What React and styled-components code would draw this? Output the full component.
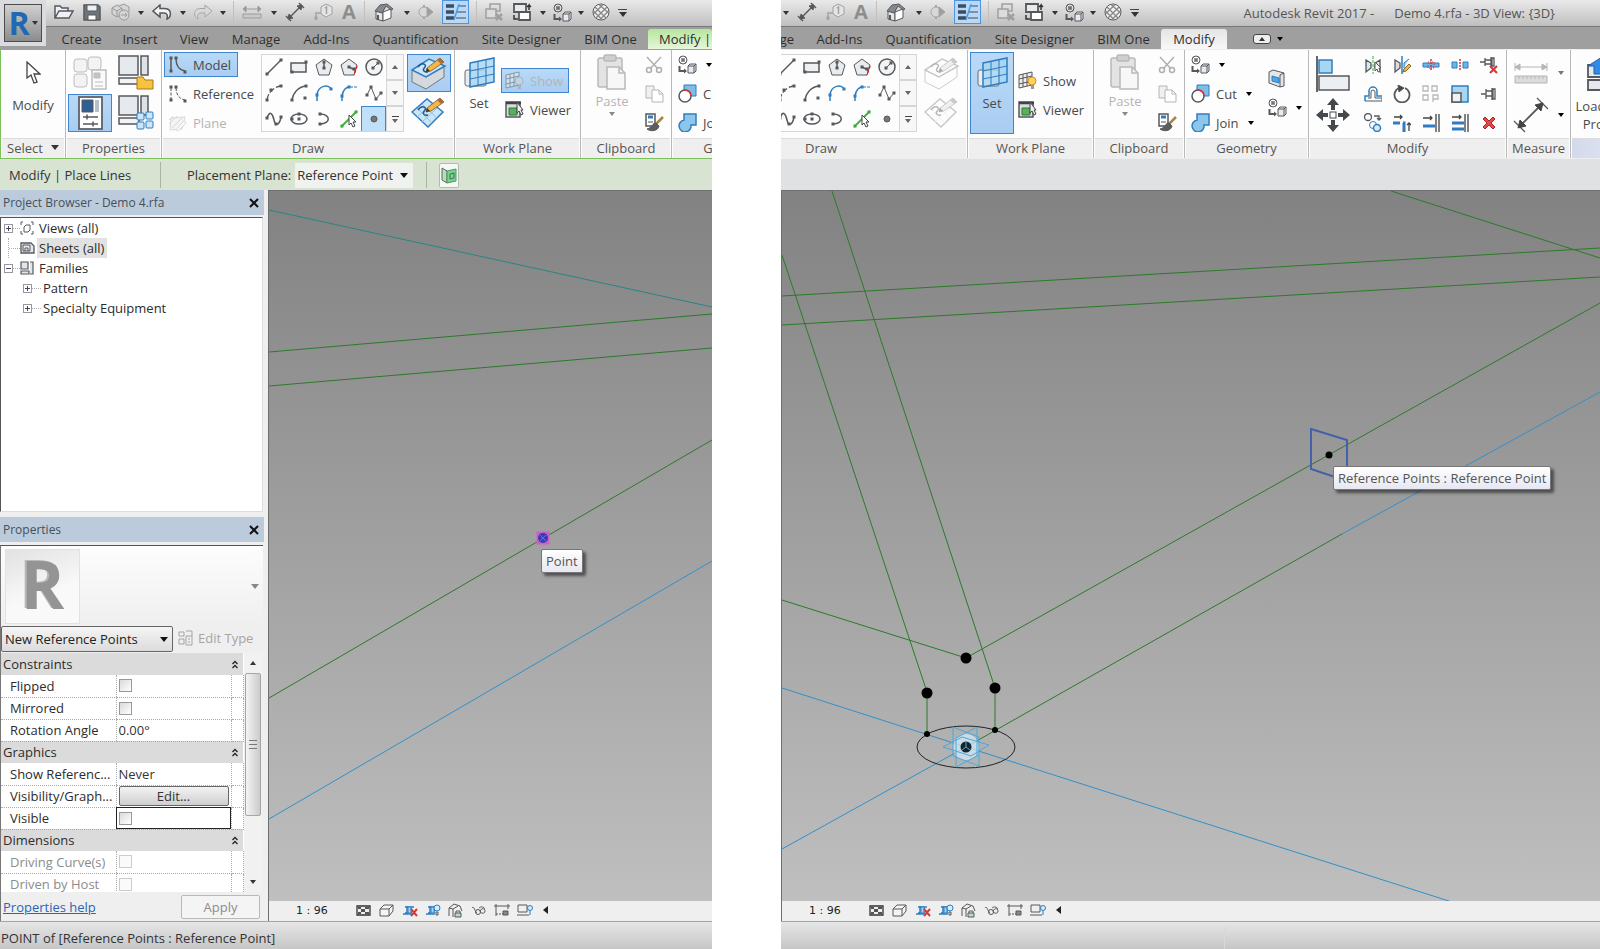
import React from "react";
import styled, { createGlobalStyle, css } from "styled-components";

const GlobalStyle = createGlobalStyle`
  * {
    box-sizing: border-box;
  }
  body {
    margin: 0;
    background: #fff;
    color: #333;
    font-family: "Open Sans", "Noto Sans", sans-serif;
    font-size: 13px;
    line-height: 18px;
    overflow: hidden;
  }
  button, select, input {
    font: inherit;
    color: inherit;
    margin: 0;
  }
  svg {
    display: block;
    flex: none;
  }
`;

/* icons */
const INK = "#55585c";
const BLUE = "#2f7dc0";
const SKY = "#a8d5f2";

const node = (x, y, c = INK) => (
  <rect key={`${x}-${y}`} x={x - 1.5} y={y - 1.5} width="3" height="3" fill={c} stroke="none" />
);

const groupArt = (
  <>
    <circle cx="5" cy="5" r="4" />
    <circle cx="5" cy="5" r="1.3" />
    <path d="M2 2l6 6M8 2l-6 6" strokeWidth=".6" />
    <path d="M1.5 11v5h5" strokeWidth="2" />
    <path d="M6 13.5l3 2.5-3 2.5z" fill={INK} stroke="none" />
    <path d="M10 11l2-2h6v7l-2 2h-6zM10 11h6v7M16 11l2-2" fill="#e8eaee" />
  </>
);

const pencil = (
  <g stroke="none">
    <path d="M15 16l1-4L29 2l4 4-13 9z" fill="#f2b64a" stroke="#7d5a22" strokeWidth=".8" />
    <path d="M29 2l4 4-3 2-4-4z" fill="#b06a3a" />
    <path d="M15 16l1-4 3 3z" fill="#333" />
  </g>
);

const planeGrid = (
  <>
    <rect x="1" y="13" width="21" height="16" rx="2" fill="#e9edf2" stroke="#6a6e74" />
    <path d="M6 6l24-5v24L6 30z" fill={SKY} fillOpacity=".8" stroke={BLUE} strokeWidth="1.5" />
    <path d="M14 4.5v24M22 2.5v24M6 14l24-5M6 22l24-5" stroke={BLUE} />
  </>
);

const dimArt = (
  <>
    <path d="M4 16L16 4" strokeWidth="1.5" />
    <path d="M1 14l5 5M14 1l5 5" strokeWidth="1.5" />
    <path d="M3 17l1-5 4 4zM17 3l-1 5-4-4z" fill={INK} />
  </>
);

const blocks = (
  <>
    <path d="M1 1h19v19H1z" fill="#e6e9ed" strokeWidth="1.5" />
    <path d="M23 1h7v19h-7z" fill="#dde2e7" strokeWidth="1.5" />
    <path d="M1 23h20v6H1z" fill="#f4f4f4" strokeWidth="1.5" />
  </>
);

const revealArt = (
  <>
    <path d="M1 11h3v-2M5 3v8h4V5M3 4h9" stroke={BLUE} strokeWidth="1.5" />
    <path d="M6 4h3v6H6z" fill={SKY} stroke={BLUE} />
  </>
);

const ICONS = {
  open: [20, 16, <path d="M1 14V2h5l2 2h6v3M1 14l4-7h14l-4 7z" fill="#eef2f6" strokeWidth="1.5" />],
  save: [18, 18, <><path d="M1 2h14l2 2v13H1z" fill="#70767c" strokeWidth="1.5" /><path d="M4 2h10v6H4z" fill="#eef1f4" /><path d="M5 12h8v5H5z" fill="#fff" /></>],
  sync: [19, 18, <g stroke="#999" fill="#d5d5d5"><path d="M1 5l5-3 5 3v6l-5 3-5-3zM1 5l5 3 5-3M6 8v6" /><path d="M8 3l5-2 5 3v5" /><circle cx="13" cy="12" r="5" /><path d="M10 12h6l-2-2m2 2l-2 2" /></g>],
  undo: [20, 16, <path d="M1 7l7-6v3.5h4c9 0 7 9 3 10.5 1-4 0-6-3-6H8V13z" fill="#f2f4f6" strokeWidth="1.5" />],
  redo: [20, 16, <path d="M19 7l-7-6v3.5H8c-9 0-7 9-3 10.5-1-4 0-6 3-6h4V13z" fill="#d9d9d9" stroke="#a5a5a5" />],
  measure: [20, 14, <g stroke="#9b9b9b"><path d="M2 4h16M1 4l3-3v6zM19 4l-3-3v6z" fill="#9b9b9b" /><path d="M1 9h18v4H1z" fill="#c9c9c9" /></g>],
  dimension: [20, 20, dimArt],
  tag: [19, 18, <g stroke="#a2a2a2"><path d="M2 17v-7h5" strokeWidth="1.5" /><path d="M12 1l6 3v7l-6 3-5-3V4z" fill="#e4e4e4" /><path d="M11 5l1.5-1v7" strokeWidth="1.5" />{node(2, 15, "#a2a2a2")}</g>],
  home: [20, 19, <><path d="M2 8v8l7 2V9z" fill="#e4e6e9" /><path d="M9 9l8-3v9l-8 3z" fill="#fff" /><path d="M1 8l5-6 7-1 6 5-2 1-5-4-4 7z" fill="#85898e" /><path d="M4 12v5" strokeWidth="2" /></>],
  section: [16, 14, <g stroke="#a5a5a5"><circle cx="6" cy="7" r="5" fill="#d8d8d8" /><path d="M9 2l6 5-6 5z" fill="#9f9f9f" /><path d="M6 0v2M6 12v2" strokeWidth="2" /></g>],
  thin: [20, 18, <><path d="M0 3h8M0 9h8M0 15h8" strokeWidth="3.5" stroke="#3d4c60" /><path d="M13 3h7M11 9h9M10 15h10" stroke="#3d4c60" /><path d="M13 1L8 17" stroke="#4aa0e8" strokeWidth="1.5" /></>],
  closeHidden: [19, 18, <g stroke="#a0a0a0"><path d="M5 1h10v7H5z" strokeWidth="1.5" /><path d="M1 6h10v9H1z" fill="#dcdcdc" strokeWidth="1.5" /><path d="M11 11l6 6M17 11l-6 6" strokeWidth="2.5" /></g>],
  switchWin: [20, 18, <><path d="M2 1h12v8H2z" fill="#e8eaed" strokeWidth="1.8" /><path d="M7 9h11v8H7z" fill="#fff" strokeWidth="1.8" /><path d="M17 7V2l-2 2m2-2l2 2M2 12v4h4" stroke="#333" strokeWidth="1.5" /></>],
  group: [19, 19, groupArt],
  sphere: [18, 18, <><circle cx="9" cy="9" r="8" fill="#f0f1f3" /><path d="M3 4l11 11M7 1.5L16.5 10M1.5 8L10 16.5M15 4L4 15M11 1.5L1.5 11M16.5 8L8 16.5" stroke="#888" strokeWidth="1.3" /></>],

  cursor: [15, 23, <path d="M1 1v16l4-3 3 8 3-1-3-8h6z" fill="#fff" stroke="#444" strokeWidth="1.3" />],
  typeProps: [35, 34, <g stroke="#bdbdbd" fill="#f3f3f3"><rect x="1" y="3" width="13" height="13" rx="3" /><rect x="15" y="1" width="13" height="13" rx="3" /><rect x="1" y="18" width="13" height="13" rx="3" /><rect x="19" y="14" width="14" height="19" fill="#fafafa" strokeWidth="1.5" /><path d="M21 17h6v5h-6z" fill="#c4c4c4" /><path d="M22 26h8M22 30h8" /></g>],
  familyTypes: [36, 36, <>{blocks}<path d="M19 34V22h6l2 3h8v9z" fill="#f5c33f" stroke="#a87712" /></>],
  propsPalette: [25, 34, <><rect x="1" y="1" width="23" height="32" fill="#fff" stroke="#5d6268" strokeWidth="1.8" /><path d="M4 4h11v12H4z" fill="#2f5f95" /><path d="M17 4h4v12h-4z" fill="#b9bfc6" stroke="none" /><path d="M5 21h15M9 18.5v5M5 28h15M15 25.5v5" strokeWidth="1.5" /></>],
  familyGrid: [36, 36, <>{blocks}<g fill="#c9e6fa" stroke="#2e7cba"><rect x="19" y="18" width="7" height="7" rx="1" /><rect x="28" y="17" width="7" height="7" rx="1" /><rect x="19" y="27" width="7" height="7" rx="1" /><rect x="28" y="26" width="7" height="7" rx="1" /></g></>],
  model: [19, 18, <><path d="M3 3v12M8 3c0 6 3 11 9 12" strokeWidth="1.5" />{node(3, 2)}{node(8, 2)}{node(3, 15)}{node(17, 16)}</>],
  reference: [19, 18, <><path d="M3 3v12M8 3c0 6 3 11 9 12" strokeDasharray="3 1.5" />{node(3, 2)}{node(8, 2)}{node(3, 15)}{node(17, 16)}</>],
  refPlane: [19, 18, <g stroke="#b5b5b5"><path d="M3 4l14-1-3 12-12 1z" fill="#ededed" /><path d="M8 16l8-9 2 2-8 8z" fill="#fff" /><path d="M1 6l4-4M1 10l8-8M4 14L15 3" /></g>],

  line: [18, 18, <><path d="M2 16L16 2" strokeWidth="1.5" />{node(2, 16)}{node(16, 2)}</>],
  rect: [18, 14, <><path d="M1 3h15v9H1z" fill="#eef0f2" strokeWidth="1.5" />{node(16, 2)}{node(2, 12)}</>],
  polygonIn: [18, 18, <><path d="M9 1l8 6-3 10H4L1 7z" fill="#e9ecef" /><path d="M9 4v6" strokeWidth="1.5" />{node(9, 4)}{node(9, 10)}</>],
  polygonOut: [18, 18, <><path d="M9 1l8 6-3 10H4L1 7z" fill="#e9ecef" /><path d="M9 9l6 3" strokeWidth="1.5" /><path d="M17 8l-3 9" stroke="#d22" strokeDasharray="3 1.5" strokeWidth="1.5" />{node(9, 9)}{node(14, 11)}</>],
  circle: [18, 18, <><circle cx="9" cy="9" r="8" fill="#f2f3f4" strokeWidth="1.5" /><path d="M8 10l6-6" />{node(8, 10)}{node(13, 5)}</>],
  arcStart: [18, 18, <><path d="M2 16C3 9 8 3 16 2" strokeDasharray="6 2" strokeWidth="1.3" />{node(2, 16)}{node(6, 6)}{node(16, 2)}</>],
  arcCenter: [18, 18, <><path d="M2 16C3 9 8 3 16 2" strokeWidth="1.3" />{node(2, 16)}{node(16, 2)}{node(15, 14)}</>],
  arcTangent: [18, 18, <><path d="M2 17V11C3 1 14 0 16 5" stroke={BLUE} strokeWidth="1.5" />{node(2, 11, BLUE)}{node(16, 5, BLUE)}</>],
  arcFillet: [18, 18, <><path d="M2 17v-5C3 6 6 3 10 3" stroke={BLUE} strokeWidth="1.5" /><path d="M10 3h8" stroke={BLUE} strokeDasharray="3 1" />{node(2, 12, BLUE)}{node(9, 3, BLUE)}</>],
  spline: [18, 18, <><path d="M2 11L6 3l5 12 5-6" />{node(2, 11)}{node(6, 3)}{node(11, 15)}{node(16, 9)}</>],
  splinePts: [18, 16, <><path d="M2 7C5-2 8 4 9 9s5 7 7-3" strokeWidth="1.5" />{node(2, 7)}{node(11, 13)}{node(16, 6)}</>],
  ellipse: [18, 14, <><ellipse cx="9" cy="7" rx="8" ry="5" strokeWidth="1.5" />{node(9, 7)}{node(9, 2)}{node(2, 7)}</>],
  halfEllipse: [12, 14, <><path d="M2 2c11 0 11 10 0 10" strokeWidth="1.5" />{node(2, 2)}{node(2, 12)}</>],
  pick: [18, 18, <><path d="M1 17L17 1" stroke="#3fae3a" strokeWidth="1.8" />{node(2, 16, "#3fae3a")}{node(16, 2, "#3fae3a")}<path d="M9 5v10l2-2 2 4 2-1-2-4h3z" fill="#fff" stroke="#444" /></>],
  point: [8, 8, <circle cx="4" cy="4" r="3" fill="#777" />],
  faceDraw: [36, 34, <><path d="M1 14v12l14 7 18-12V9L15 21z" fill="#d5d9dd" stroke="#73787e" /><path d="M1 14L18 3l16 7-19 11z" fill="#cbe6f8" stroke={BLUE} strokeWidth="1.5" /><path d="M7 11c4-6 9-2 7 0s-3 5 3 5" stroke="#1f5a94" strokeWidth="1.5" />{pencil}</>],
  planeDraw: [36, 34, <><path d="M1 16L16 3l16 13-15 15z" fill="#cbe6f8" stroke={BLUE} strokeWidth="1.5" /><path d="M6 12l15 15M11 8l15 14M6 21L21 8M11 26l15-14" stroke="#8fbfe2" /><path d="M7 14c4-6 9-2 7 0s-3 6 3 5" stroke="#1f5a94" strokeWidth="1.5" />{pencil}</>],

  setPlane: [31, 31, planeGrid],
  showPlane: [19, 19, <><path d="M1 4l13-3v13L1 17zM5 3v13M9 2v13M1 8l13-3M1 13l13-3" fill="#eee" /><circle cx="14" cy="10" r="4" fill="#ffd45c" stroke="#e08a1c" /><path d="M13 14h3v4h-3z" fill="#999" stroke="none" /></>],
  viewer: [19, 18, <><rect x="1" y="1" width="14" height="15" fill="#d9dde0" strokeWidth="1.5" /><path d="M1 2h15" strokeWidth="2.5" stroke="#444" /><path d="M4 7h8v7H4z" fill="#57b35a" stroke="#2c7a34" /><path d="M12 1v11l2-2 2 4 2-1-2-4h2z" fill="#eee" stroke="#444" /></>],
  paste: [30, 36, <g stroke="#b9b9b9" strokeWidth="1.5"><rect x="1" y="4" width="24" height="29" rx="2" fill="#e3e3e3" /><rect x="7" y="1" width="12" height="6" rx="2" fill="#cfcfcf" /><path d="M10 13h12l6 6v16H10z" fill="#f7f7f7" /><path d="M22 13v6h6" /></g>],
  scissors: [18, 18, <g stroke="#b0b0b0" strokeWidth="1.5"><path d="M2 1l11 12M16 1L5 13" /><circle cx="4" cy="14" r="2.5" /><circle cx="14" cy="14" r="2.5" /></g>],
  copy: [19, 18, <g stroke="#b5b5b5"><path d="M1 1h8v12H1z" fill="#f0f0f0" /><path d="M7 5h7l4 4v8H7z" fill="#fff" /><path d="M14 5v4h4" /></g>],
  match: [19, 19, <><rect x="1" y="1" width="9" height="12" fill="#fff" strokeWidth="1.5" /><path d="M3 4h5" stroke={BLUE} strokeWidth="3" /><path d="M3 9h5" /><path d="M18 4l-8 8" stroke="#a98545" strokeWidth="2.5" /><path d="M11 10c-4 0-4 5-9 6 4 3 11 2 12-3z" fill="#5a5d62" /></>],
  cut: [19, 19, <><path d="M6 1h12v11H6z" fill="#7fbce6" stroke={BLUE} /><circle cx="7" cy="12" r="6" fill="#fff" strokeWidth="1.5" /><path d="M6 6c4 0 7 2 7 6" stroke="#d33" strokeWidth="1.5" /></>],
  join: [19, 19, <path d="M6 1h12v11h-5a6 6 0 1 1-7-5z" fill="#8cc6ea" stroke={BLUE} strokeWidth="1.5" />],
  wallJoin: [18, 19, <><path d="M1 3l4-2 11 3v13l-4 1L1 14z" fill="#dfe6ec" /><path d="M4 7l7 2v5l-7-2z" fill="#54a3dd" stroke={BLUE} /><path d="M12 6v12M12 6l4-2" /></>],

  align: [36, 36, <><path d="M2 0v36" stroke="#333" strokeWidth="1.5" /><path d="M4 4h13v13H4z" fill={SKY} stroke={BLUE} strokeWidth="1.5" /><path d="M4 20h30v14H4z" fill="#eceff1" strokeWidth="1.5" /></>],
  move: [36, 36, <g fill="#45494e" stroke="none"><path d="M18 1l6 7h-4v5h-4V8h-4zM18 35l6-7h-4v-5h-4v5h-4zM1 18l7-6v4h5v4H8v4zM35 18l-7-6v4h-5v4h5v4z" /><rect x="15" y="15" width="6" height="6" fill="#fff" stroke="#45494e" /></g>],
  mirrorPick: [18, 18, <><path d="M2 4l5 3v5l-5 4zM16 4l-5 3v5l5 4z" fill="#d6e6f2" strokeWidth="1.3" /><path d="M9 0v18" stroke="#3fae3a" strokeDasharray="3 1" /><path d="M11 6v9l2-2 1 3 2-1-1-3h2z" fill="#fff" /></>],
  mirrorDraw: [18, 18, <><path d="M2 4l5 3v5l-5 4z" fill="#ddd" strokeWidth="1.3" /><path d="M16 3l-5 4v5" fill={SKY} stroke={BLUE} /><path d="M9 0v18" stroke={BLUE} strokeWidth="1.5" /><path d="M10 16l1-3 5-5 2 2-5 5z" fill="#f2b64a" stroke="#8a6420" /></>],
  split: [18, 12, <><path d="M1 4h16v4H1z" fill="#6db5e4" stroke={BLUE} /><path d="M9 0v12" stroke="#d33" strokeDasharray="2 1" strokeWidth="1.5" /><path d="M6 3h6v6H6z" stroke="#d33" strokeDasharray="1 1" /></>],
  splitGap: [18, 12, <><path d="M1 3h5v6H1zM12 3h5v6h-5z" fill="#6db5e4" stroke={BLUE} /><path d="M9 0v12" stroke="#d33" strokeDasharray="2 1" strokeWidth="1.5" /></>],
  unpin: [18, 18, <><path d="M0 6h5M5 2v8M5 4h6M5 8h6M11 1v10M12 2h2v8h-2z" strokeWidth="1.3" /><path d="M10 10l7 7M17 10l-7 7" stroke="#d23b3b" strokeWidth="2.2" /></>],
  offset: [18, 16, <><path d="M1 15v-5h4V5a4 4 0 0 1 8 0v5h5" stroke={BLUE} strokeWidth="1.5" /><path d="M1 15h17v-3h-7V6a2 2 0 0 0-4 0v6H4" /></>],
  rotate: [18, 18, <><path d="M6 3a7.5 7.5 0 1 0 6 0" strokeWidth="1.8" /><path d="M5 0l6 3-5 4z" fill="#444" /></>],
  array: [18, 18, <g stroke="#b8b8b8" strokeWidth="1.3"><path d="M1 1h5v5H1zM10 1h5v5h-5zM1 10h5v5H1zM11 17v-7h5v4h-5" /></g>],
  scale: [18, 18, <><path d="M1 1h16v16H1z" fill={SKY} stroke={BLUE} strokeWidth="1.5" /><path d="M1 8h9v9H1z" fill="#f2f2f2" strokeWidth="1.5" /></>],
  pin: [15, 14, <path d="M0 7h5M5 2v10M5 4h6M5 9h6M11 1v12M12 2h2v10h-2z" strokeWidth="1.3" />],
  copyObj: [19, 19, <><circle cx="5" cy="4" r="3.5" strokeWidth="1.3" /><path d="M11 3h5v4m-2-2l2 2 2-2" strokeWidth="1.3" /><circle cx="10" cy="12" r="3.5" fill="#fff" stroke={BLUE} /><circle cx="14" cy="15" r="3.5" fill="#d5ebfa" stroke={BLUE} strokeWidth="1.5" /></>],
  trimCorner: [18, 18, <><path d="M1 3h8m-2-2l2 2-2 2M16 17V9m-2 2l2-2 2 2" stroke="#444" strokeWidth="1.3" /><path d="M0 9h7M10 9h1v9" stroke={BLUE} strokeWidth="3" /></>],
  trimSingle: [18, 18, <><path d="M1 4h9m-2-2l2 2-2 2" stroke="#444" strokeWidth="1.3" /><path d="M1 12h12" stroke={BLUE} strokeWidth="3" /><path d="M14 0v18M17 0v18" strokeWidth="1.5" /></>],
  trimMulti: [18, 18, <><path d="M1 3h9m-2-2l2 2-2 2" stroke="#444" strokeWidth="1.3" /><path d="M1 9h12M1 15h12" stroke={BLUE} strokeWidth="3" /><path d="M14 0v18M17 0v18" strokeWidth="1.5" /></>],
  del: [16, 16, <path d="M2 4l2-2 4 4 4-4 2 2-4 4 4 4-2 2-4-4-4 4-2-2 4-4z" fill="#e24a4a" stroke="#b52222" />],
  ruler: [34, 22, <g stroke="#b5b5b5"><path d="M1 5h32M1 1v8M33 1v8" /><path d="M1 5l5-3v6zM33 5l-5-3v6z" fill="#b5b5b5" /><path d="M1 14h32v7H1z" fill="#dcdcdc" /><path d="M5 14v3M9 14v3M13 14v3M17 14v3M21 14v3M25 14v3M29 14v3" /></g>],
  dimensionBig: [36, 36, <><path d="M6 30L29 7" strokeWidth="1.8" /><path d="M1 24l11 11M24 1l11 11" strokeWidth="1.3" /><path d="M5 31l2-8 6 6zM30 6l-2 8-6-6z" fill="#444" stroke="#444" /></>],
  load: [36, 34, <><path d="M2 8h14v12H2zM2 23h16v10H2z" fill="#e6e9ed" strokeWidth="1.8" /><path d="M16 0L2 9h6v8h14V9h6z" fill="#2f8de8" stroke="#1b5fae" /></>],
  workPlaneViewer: [16, 17, <><path d="M1 1l5 3v12L1 13z" fill="#b9dcbf" stroke="#5a6b5c" /><path d="M6 4l9-2v12l-9 2z" fill="#7fcf94" stroke="#4b9a5e" /><path d="M9 7l4-1v5l-4 1z" stroke="#2d7f48" /></>],

  views: [14, 14, <><path d="M1 4V1h2M11 1h2v3M1 10v3h2M13 10v3h-2" /><path d="M4 6l2-2h4v5l-2 2H4z" /></>],
  sheets: [15, 12, <><path d="M1 1h10l3 3v7H1z" fill="#e6e8ec" strokeWidth="1.3" /><path d="M3 3h7v6H3zM5 9V6h3v3" /></>],
  families: [14, 14, <path d="M1 1h7v7H1zM10 1h3v12h-3M1 10h8v3H1z" fill="#e3e5ea" strokeWidth="1.2" />],
  editType: [15, 16, <g stroke="#a5a5a5"><path d="M1 2h5v4H1zM8 1h6v5M1 9h5v5H1z" /><path d="M8 6h6v9H8z" /><path d="M10 9h2M10 12h2" /></g>],

  detail: [15, 11, <><path d="M1 1h13v9H1z" strokeWidth="1.3" stroke="#333" /><path d="M2 2h3v2H2zM9 2h4v2H9zM5 4h4v3H5zM2 7h3v2H2zM9 7h4v2H9z" fill="#555" stroke="none" /></>],
  visual: [15, 13, <path d="M1 5l4-4h9v6l-4 5H1zM1 5h9v7M10 5l4-4" fill="#f4f4f4" />],
  hideX: [16, 14, <>{revealArt}<path d="M9 6l6 7M15 6l-6 7" stroke="#d23b3b" strokeWidth="2" /></>],
  hideBulb: [16, 14, <>{revealArt}<circle cx="12" cy="5" r="3" fill="#d6ecff" stroke={BLUE} /><path d="M11 9h2v3h-2z" /></>],
  lockView: [15, 15, <><path d="M1 13V5l5-4 6 2 2 5M5 6v8M1 5l4 1 5-3" /><path d="M7 10h6v4H7z" fill="#b9dcc4" /><path d="M8 10V8h4v2" /></>],
  glasses: [15, 11, <><path d="M1 3c2-3 3 4 5 5" /><circle cx="7" cy="7" r="2.5" /><path d="M8 3c2-2 5-1 6 1M9 6c1-3 5-3 5 0s-4 3-5 0" /></>],
  constraints: [16, 12, <><path d="M2 0v12M14 0v5M0 2h16" /><path d="M2 10h7" strokeDasharray="2 1" /><path d="M9 7h5v4H9z" fill="#888" /></>],
  analytic: [16, 12, <><path d="M1 1h9v7H1zM0 11h12" /><circle cx="13" cy="4" r="2.5" fill="#d6ecff" stroke={BLUE} /><path d="M13 7v4" stroke={BLUE} /></>],
};

function Icon({ name }) {
  const [w, h, art] = ICONS[name];
  return (
    <svg width={w} height={h} viewBox={`0 0 ${w} ${h}`} fill="none" stroke={INK} strokeWidth="1" aria-hidden="true">
      {art}
    </svg>
  );
}

const Caret = styled.i`
  flex: none;
  width: 0;
  height: 0;
  border: 3px solid transparent;
  border-top: 4px solid ${(p) => p.$color || "#333"};
  border-bottom: 0;
  ${(p) => p.$up && css`transform: rotate(180deg);`}
`;

const WideCaret = styled(Caret)`
  border-width: 5px 4px 0;
`;

/* window frame */
const Page = styled.main`
  display: grid;
  grid-template-columns: minmax(0, 712fr) minmax(0, 819fr);
  gap: 69px;
  height: 100vh;
`;

const Pane = styled.section`
  display: flex;
  flex-direction: column;
  min-width: 0;
  overflow: hidden;
`;

const Header = styled.header`
  display: flex;
  background: #9f9f9f;
`;

const AppCell = styled.div`
  flex: none;
  width: 46px;
  height: 46px;
  padding: 4px;
  background: #dadbde;
`;

const AppButton = styled.button`
  display: flex;
  align-items: center;
  justify-content: center;
  gap: 2px;
  width: 38px;
  height: 38px;
  padding: 0;
  border: 1px solid #4c4c4c;
  background: linear-gradient(#d0d0d0, #8c8c8c);
`;

const AppLetter = styled.span`
  font-size: 32px;
  font-weight: 700;
  line-height: 36px;
  color: #1f68b4;
`;

const HeaderRows = styled.div`
  flex: 1;
  min-width: 0;
`;

const QuickBar = styled.div`
  display: flex;
  align-items: center;
  gap: 8px;
  height: 27px;
  padding-left: ${(p) => p.$start}px;
  padding-right: 45px;
  border-bottom: 1px solid #777;
  background: linear-gradient(#e9e9e9, #bfbfbf);
`;

const QuickButton = styled.button`
  display: flex;
  flex: none;
  align-items: center;
  justify-content: center;
  width: ${(p) => p.$w || 20}px;
  height: 24px;
  margin-bottom: 2px;
  padding: 0;
  border: 0;
  background: none;
  ${(p) =>
    p.$on &&
    css`
      border: 1px solid #4f94dc;
      background: #b8d8f8;
    `}
`;

const TextLetter = styled.span`
  font-size: 20px;
  font-weight: 700;
  line-height: 24px;
  color: #8d8d8d;
`;

const QuickSep = styled.span`
  flex: none;
  width: 1px;
  height: 24px;
  margin: 0 -1px;
  background: #c0c0c0;
`;

const MoreTools = styled.span`
  display: flex;
  flex: none;
  flex-direction: column;
  align-items: center;
  width: 9px;
  border-top: 1px solid #444;
  padding-top: 2px;
`;

const WindowTitle = styled.h1`
  display: flex;
  gap: 20px;
  margin: 0 0 0 auto;
  font-size: 13px;
  font-weight: 400;
  color: #555;
  white-space: nowrap;
`;

const TabBar = styled.nav`
  display: flex;
  align-items: flex-end;
  height: 22px;
  padding-left: ${(p) => p.$start}px;
`;

const Tab = styled.button`
  display: flex;
  flex: none;
  align-items: center;
  justify-content: ${(p) => p.$align || "center"};
  width: ${(p) => p.$w}px;
  height: 20px;
  padding: 0 ${(p) => p.$pad || 0}px;
  border: 0;
  background: none;
  color: #2e2e2e;
  white-space: nowrap;
  ${(p) =>
    p.$active &&
    css`
      border-radius: 3px 3px 0 0;
      background: ${p.$green ? "linear-gradient(#b6e59b, #e6f6dc)" : "linear-gradient(#e4e4e4, #f8f8f8)"};
    `}
`;

const RibbonToggle = styled.button`
  display: flex;
  align-items: center;
  gap: 6px;
  height: 20px;
  margin-left: 26px;
  padding: 0;
  border: 0;
  background: none;
`;

const ToggleFace = styled.span`
  display: flex;
  align-items: center;
  justify-content: center;
  width: 18px;
  height: 10px;
  border: 1px solid #444;
  border-radius: 3px;
  background: #eee;
`;

/* ribbon */
const Ribbon = styled.div`
  display: flex;
  flex: none;
  height: 110px;
  overflow: hidden;
  border-top: 1px solid ${(p) => (p.$green ? "#7bc25c" : "#eee")};
  border-bottom: 1px solid ${(p) => (p.$green ? "#7bc25c" : "#eee")};
  border-left: ${(p) => (p.$green ? "1px solid #7bc25c" : "0")};
  background: #fdfdfd;
`;

const Panel = styled.section`
  display: flex;
  flex-direction: column;
  flex: none;
  width: ${(p) => p.$w}px;
  margin-left: -${(p) => p.$crop || 0}px;
  border-right: 1px solid #b9b9b9;
`;

const PanelBody = styled.div`
  display: flex;
  flex: 1;
  align-items: flex-start;
  min-height: 0;
  padding: 2px;
  ${(p) => p.$end && css`justify-content: flex-end; padding-right: 3px;`}
`;

const PanelLabel = styled.h2`
  display: flex;
  flex: none;
  align-items: center;
  justify-content: center;
  gap: 8px;
  height: 20px;
  margin: 0 1px;
  padding-bottom: 2px;
  border-top: 1px solid #dcdcdc;
  background: ${(p) => (p.$tint ? "linear-gradient(90deg, #d3d9ec, #e6e9f5)" : "#efefef")};
  font-size: 13px;
  font-weight: 400;
  color: #555;
`;

const Stack = styled.div`
  display: flex;
  flex-direction: column;
  flex: none;
  gap: ${(p) => p.$gap || 0}px;
  width: ${(p) => (p.$w ? `${p.$w}px` : "auto")};
  padding-top: ${(p) => p.$top || 0}px;
`;

const lit = css`
  border-color: #3f86cf;
  background: linear-gradient(#b9d9f7, #a9cdf2);
`;

const RowTool = styled.button`
  display: flex;
  align-items: center;
  gap: 6px;
  width: ${(p) => (p.$w ? `${p.$w}px` : "auto")};
  height: 25px;
  padding: 0 3px;
  border: 1px solid transparent;
  background: none;
  color: ${(p) => (p.$off ? "#b4b4b4" : "#4a4a4a")};
  white-space: nowrap;
  ${Caret} {
    margin-left: 3px;
  }
  ${(p) => p.$on && lit}
  ${(p) => p.$off && css`svg { filter: grayscale(1); opacity: 0.5; }`}
`;

const IconTool = styled.button`
  display: flex;
  flex: none;
  align-items: center;
  justify-content: center;
  width: ${(p) => p.$w}px;
  height: ${(p) => p.$h}px;
  padding: 0;
  border: 1px solid transparent;
  background: none;
  ${(p) => p.$on && lit}
  ${(p) => p.$off && css`svg { filter: grayscale(1) brightness(1.2); opacity: 0.45; }`}
`;

const BigTool = styled.button`
  display: flex;
  flex-direction: column;
  flex: none;
  align-items: center;
  gap: ${(p) => p.$gap || 6}px;
  width: ${(p) => p.$w}px;
  height: 82px;
  padding: ${(p) => p.$top || 4}px 0 0;
  border: 1px solid transparent;
  background: none;
  color: ${(p) => (p.$off ? "#b4b4b4" : "#4a4a4a")};
  white-space: nowrap;
  ${(p) => p.$on && lit}
`;

const Gallery = styled.div`
  display: grid;
  grid-template-columns: repeat(5, 25px) 18px;
  grid-template-rows: repeat(3, 26px);
  flex: none;
  margin: 2px 3px 0 0;
  outline: 1px solid #d5d5d5;
  outline-offset: -1px;
`;

const GalleryItem = styled.button`
  display: flex;
  align-items: center;
  justify-content: center;
  padding: 0;
  border: 1px solid transparent;
  background: none;
  ${(p) => p.$on && css`border-color: #3f86cf; background: #bfe0f8;`}
`;

const GalleryScroll = styled.button`
  display: flex;
  flex-direction: column;
  align-items: center;
  justify-content: center;
  gap: 2px;
  padding: 0;
  border: 1px solid #d5d5d5;
  background: #f7f7f7;
  ${(p) => p.$bar && css`&::before { content: ""; width: 7px; height: 1px; background: #444; }`}
`;

const ModifyGrid = styled.div`
  display: grid;
  grid-template-columns: repeat(5, 29px);
  grid-template-rows: repeat(3, 25px);
  row-gap: 4px;
  margin-left: 3px;
`;

const SplitTool = styled.div`
  display: flex;
  align-items: center;
  gap: 5px;
`;

const DRAW_TOOLS = [
  "line", "rect", "polygonIn", "polygonOut", "circle", "up",
  "arcStart", "arcCenter", "arcTangent", "arcFillet", "spline", "down",
  "splinePts", "ellipse", "halfEllipse", "pick", "point", "more",
];

function DrawPanel({ active }) {
  return (
    <Panel $w={293} $crop={active ? 0 : 106}>
      <PanelBody $end>
        {active && (
          <Stack $w={97} $gap={4}>
            <RowTool $w={74} $on><Icon name="model" />Model</RowTool>
            <RowTool><Icon name="reference" />Reference</RowTool>
            <RowTool $off disabled><Icon name="refPlane" />Plane</RowTool>
          </Stack>
        )}
        <Gallery>
          {DRAW_TOOLS.map((tool) =>
            ["up", "down", "more"].includes(tool) ? (
              <GalleryScroll key={tool} $bar={tool === "more"} aria-label={tool}>
                <Caret $up={tool === "up"} $color="#666" />
              </GalleryScroll>
            ) : (
              <GalleryItem key={tool} $on={active && tool === "point"} aria-label={tool}>
                <Icon name={tool} />
              </GalleryItem>
            )
          )}
        </Gallery>
        <Stack $top={2} $gap={2}>
          <IconTool $w={44} $h={38} $on={active} $off={!active} aria-label="Draw on Face"><Icon name="faceDraw" /></IconTool>
          <IconTool $w={44} $h={38} $off={!active} aria-label="Draw on Work Plane"><Icon name="planeDraw" /></IconTool>
        </Stack>
      </PanelBody>
      <PanelLabel>Draw</PanelLabel>
    </Panel>
  );
}

function WorkPlanePanel({ setting }) {
  return (
    <Panel $w={126}>
      <PanelBody>
        <BigTool $w={44} $on={setting}><Icon name="setPlane" />Set</BigTool>
        <Stack $top={16} $gap={4}>
          <RowTool $w={68} $on={!setting} $off={!setting}><Icon name="showPlane" />Show</RowTool>
          <RowTool><Icon name="viewer" />Viewer</RowTool>
        </Stack>
      </PanelBody>
      <PanelLabel>Work Plane</PanelLabel>
    </Panel>
  );
}

function ClipboardPanel() {
  return (
    <Panel $w={91}>
      <PanelBody>
        <BigTool $w={58} $gap={2} $top={1} $off disabled>
          <Icon name="paste" />
          <span>Paste</span>
          <Caret $color="#888" />
        </BigTool>
        <Stack $gap={4}>
          <IconTool $w={26} $h={25} aria-label="Cut to Clipboard"><Icon name="scissors" /></IconTool>
          <IconTool $w={26} $h={25} aria-label="Copy to Clipboard"><Icon name="copy" /></IconTool>
          <IconTool $w={26} $h={25} aria-label="Match Type"><Icon name="match" /></IconTool>
        </Stack>
      </PanelBody>
      <PanelLabel>Clipboard</PanelLabel>
    </Panel>
  );
}

function GeometryPanel() {
  return (
    <Panel $w={124}>
      <PanelBody>
        <Stack $w={77} $gap={4}>
          <RowTool aria-label="Cope"><Icon name="group" /><Caret $color="#000" /></RowTool>
          <RowTool><Icon name="cut" />Cut <Caret $color="#000" /></RowTool>
          <RowTool><Icon name="join" />Join <Caret $color="#000" /></RowTool>
        </Stack>
        <Stack $top={14} $gap={4}>
          <RowTool aria-label="Wall Joins"><Icon name="wallJoin" /></RowTool>
          <RowTool aria-label="Demolish"><Icon name="group" /><Caret $color="#000" /></RowTool>
        </Stack>
      </PanelBody>
      <PanelLabel>Geometry</PanelLabel>
    </Panel>
  );
}

const MODIFY_TOOLS = [
  "mirrorPick", "mirrorDraw", "split", "splitGap", "unpin",
  "offset", "rotate", "array", "scale", "pin",
  "copyObj", "trimCorner", "trimSingle", "trimMulti", "del",
];

function ModifyPanel() {
  return (
    <Panel $w={198}>
      <PanelBody>
        <Stack $gap={1} $top={2}>
          <IconTool $w={44} $h={40} aria-label="Align"><Icon name="align" /></IconTool>
          <IconTool $w={44} $h={40} aria-label="Move"><Icon name="move" /></IconTool>
        </Stack>
        <ModifyGrid>
          {MODIFY_TOOLS.map((tool) => (
            <IconTool key={tool} $w={29} $h={25} aria-label={tool}><Icon name={tool} /></IconTool>
          ))}
        </ModifyGrid>
      </PanelBody>
      <PanelLabel>Modify</PanelLabel>
    </Panel>
  );
}

/* quick access toolbar */
const QUICK_START = ["open", "save", "sync", "caret", "undo", "caret", "redo", "caret", "sep", "measure"];
const QUICK_TOOLS = [
  "caret", "dimension", "tag", "letter", "sep", "home", "caret", "section", "thin", "sep",
  "closeHidden", "switchWin", "caret", "group", "caret", "sphere", "more",
];
const QUICK_WIDTHS = { redo: 18, measure: 22, letter: 16, home: 24, section: 16, thin: 27, group: 16, sphere: 18 };

function QuickTools({ tools }) {
  return tools.map((tool, i) => {
    if (tool === "caret") return <Caret key={i} />;
    if (tool === "sep") return <QuickSep key={i} />;
    if (tool === "more") return <MoreTools key={i}><WideCaret /></MoreTools>;
    return (
      <QuickButton key={i} $w={QUICK_WIDTHS[tool]} $on={tool === "thin"} aria-label={tool}>
        {tool === "letter" ? <TextLetter>A</TextLetter> : <Icon name={tool} />}
      </QuickButton>
    );
  });
}

/* options bar */
const OptionsBar = styled.div`
  display: flex;
  flex: none;
  align-items: center;
  height: 31px;
  padding: 1px 0 0 9px;
  background: ${(p) => (p.$green ? "#d8e4d1" : "#dfe1e3")};
  color: #333;
`;

const OptionsMode = styled.span`
  width: 151px;
`;

const OptionsSep = styled.span`
  width: 1px;
  height: 26px;
  background: #a9b5a4;
`;

const PlaneLabel = styled.label`
  display: flex;
  align-items: center;
  gap: 4px;
  margin: 0 13px 0 26px;
`;

const SelectBox = styled.span`
  position: relative;
  display: flex;
  width: ${(p) => p.$w}px;
  ${Caret} {
    position: absolute;
    right: 5px;
    top: 50%;
    margin-top: -2px;
    pointer-events: none;
  }
`;

const PlaneSelect = styled.select`
  appearance: none;
  width: 100%;
  height: 25px;
  padding: 0 20px 0 2px;
  border: 0;
  border-radius: 0;
  background: #f0f2ef;
`;

const ViewerToggle = styled.button`
  display: flex;
  align-items: center;
  justify-content: center;
  width: 20px;
  height: 25px;
  margin-left: 12px;
  padding: 0;
  border: 1px solid #b5b9b3;
  border-radius: 2px;
  background: #f6f8f5;
`;

/* side palettes */
const Workspace = styled.div`
  display: flex;
  flex: 1;
  min-height: 0;
`;

const Side = styled.aside`
  display: flex;
  flex-direction: column;
  flex: none;
  width: 268px;
  padding-right: 4px;
  background: #efefef;
  overflow: hidden;
`;

const PaletteTitle = styled.h2`
  display: flex;
  flex: none;
  align-items: center;
  justify-content: space-between;
  height: 25px;
  margin: 0;
  padding: 0 4px 0 3px;
  background: #bccbdb;
  font-size: 12px;
  font-weight: 400;
  color: #44505c;
`;

const CloseButton = styled.button`
  display: flex;
  align-items: center;
  justify-content: center;
  width: 13px;
  height: 20px;
  padding: 0;
  border: 0;
  background: none;
`;

const BrowserBox = styled.div`
  flex: none;
  height: 295px;
  margin: 2px 1px 5px 0;
  padding: 0 0 0 8px;
  border: 1px solid #ddd;
  border-top-color: #555;
  border-left-color: #555;
  background: #fff;
`;

const Tree = styled.ul`
  margin: 0 0 0 ${(p) => p.$indent || 0}px;
  padding: 0;
  list-style: none;
  color: #2c2c2c;
`;

const TreeRow = styled.div`
  display: flex;
  align-items: center;
  height: 20px;
  margin-left: -5px;
`;

const TreeDash = styled.i`
  width: ${(p) => p.$w}px;
  border-top: 1px dotted #aaa;
`;

const Expander = styled.button`
  display: flex;
  flex: none;
  width: 9px;
  height: 9px;
  padding: 0;
  border: 1px solid #999;
  background: linear-gradient(currentColor, currentColor) center / 5px 1px no-repeat,
    linear-gradient(currentColor, currentColor) center / 1px ${(p) => (p.$open ? 0 : 5)}px no-repeat, #fff;
  color: #446;
`;

const LeafRail = styled.i`
  width: 5px;
  height: 20px;
  margin-left: 4px;
  border-left: 1px dotted #aaa;
  background: linear-gradient(90deg, #bbb 50%, transparent 50%) 0 50% / 2px 1px repeat-x;
`;

const TreeIcon = styled.span`
  display: flex;
  flex: none;
  width: 17px;
`;

const TreeText = styled.span`
  padding: 0 3px 0 2px;
  line-height: 20px;
  background: ${(p) => (p.$picked ? "#e2e2e2" : "none")};
`;

const PropertiesBox = styled.div`
  display: flex;
  flex-direction: column;
  flex: 1;
  min-height: 0;
  margin: 3px 1px 0 0;
  border-top: 1px solid #555;
  border-left: 1px solid #777;
`;

const TypePreview = styled.div`
  display: flex;
  flex: none;
  align-items: center;
  justify-content: space-between;
  height: 80px;
  padding: 0 4px;
  background: linear-gradient(#fdfdfd, #efefef);
`;

const PreviewThumb = styled.div`
  display: flex;
  justify-content: center;
  width: 75px;
  height: 75px;
  border: 1px solid #e2e2e2;
  background: linear-gradient(160deg, #e2e2e2, #f9f9f9 60%);
`;

const PreviewLetter = styled.span`
  font-size: 66px;
  font-weight: 700;
  line-height: 66px;
  color: #949494;
  text-shadow: -2px -1px 0 #b9b9b9;
`;

const TypeRow = styled.div`
  display: flex;
  flex: none;
  align-items: flex-start;
  gap: 5px;
  height: 27px;
`;

const TypeSelect = styled.select`
  appearance: none;
  width: 100%;
  height: 26px;
  padding: 0 20px 0 3px;
  border: 1px solid #666;
  border-radius: 2px;
  background: linear-gradient(#f4f4f4, #dcdcdc);
  color: #222;
`;

const EditType = styled.button`
  display: flex;
  align-items: center;
  gap: 5px;
  height: 24px;
  padding: 0;
  border: 0;
  background: none;
  color: #a5a5a5;
  white-space: nowrap;
`;

const GridArea = styled.div`
  display: flex;
  flex: 1;
  min-height: 0;
  overflow: hidden;
`;

const PropTable = styled.table`
  flex: none;
  align-self: flex-start;
  width: 242px;
  table-layout: fixed;
  border-collapse: collapse;
  background: #fff;
`;

const Section = styled.th`
  height: 22px;
  padding: 0 4px 0 2px;
  background: #dbdbdb;
  color: #2c2c2c;
  font-weight: 400;
  text-align: left;
`;

const SectionInner = styled.span`
  display: flex;
  align-items: center;
  justify-content: space-between;
`;

const NameCell = styled.th`
  height: 22px;
  padding: 0 0 0 9px;
  border-bottom: 1px dotted #aaa;
  color: ${(p) => (p.$off ? "#8c8c8c" : "#2c2c2c")};
  font-weight: 400;
  text-align: left;
  white-space: nowrap;
`;

const ValueCell = styled.td`
  height: 22px;
  padding: 0 2px;
  border: 1px dotted #aaa;
  border-top: 0;
  vertical-align: middle;
  ${(p) => p.$focus && css`outline: 1px solid #222; outline-offset: -1px;`}
`;

const Check = styled.input`
  display: block;
  appearance: none;
  width: 13px;
  height: 13px;
  margin: 0;
  border: 1px solid ${(p) => (p.disabled ? "#ccc" : "#999")};
  background: linear-gradient(135deg, #d8dadd, #fff);
  ${(p) => p.disabled && css`background: #fafafa;`}
`;

const EditButton = styled.button`
  display: block;
  width: 100%;
  height: 20px;
  padding: 0;
  border: 1px solid #666;
  border-radius: 2px;
  background: linear-gradient(#f3f3f3, #cfcfcf);
  line-height: 16px;
`;

const ScrollBar = styled.div`
  display: flex;
  flex-direction: column;
  align-items: center;
  width: 18px;
  padding: 8px 0;
  background: #f1f1f1;
`;

const ScrollThumb = styled.div`
  display: flex;
  flex-direction: column;
  justify-content: center;
  align-items: center;
  gap: 3px;
  width: 16px;
  height: 143px;
  margin: 8px 0 auto;
  border: 1px solid #a5a5a5;
  border-radius: 2px;
  background: linear-gradient(90deg, #f4f4f4, #c9cbcd);
`;

const Grip = styled.i`
  width: 8px;
  height: 1px;
  background: #777;
`;

const PropertiesFoot = styled.div`
  display: flex;
  flex: none;
  align-items: center;
  justify-content: space-between;
  height: 29px;
  padding: 0 3px 0 2px;
  a {
    color: #2a66b5;
    text-decoration: underline;
  }
`;

const ApplyButton = styled.button`
  width: 79px;
  height: 24px;
  padding: 0;
  border: 1px solid #b9b9b9;
  border-radius: 2px;
  background: #f4f4f4;
  color: #8c8c8c;
`;

const PROPERTIES = [
  { title: "Constraints" },
  { name: "Flipped", check: true },
  { name: "Mirrored", check: true },
  { name: "Rotation Angle", value: "0.00°" },
  { title: "Graphics" },
  { name: "Show Referenc...", value: "Never" },
  { name: "Visibility/Graph...", edit: true },
  { name: "Visible", check: true, focus: true },
  { title: "Dimensions" },
  { name: "Driving Curve(s)", check: true, off: true },
  { name: "Driven by Host", check: true, off: true },
];

function Close() {
  return (
    <CloseButton aria-label="Close">
      <svg width="10" height="10" viewBox="0 0 10 10" stroke="#111" strokeWidth="2">
        <path d="M1 1l8 8M9 1L1 9" />
      </svg>
    </CloseButton>
  );
}

function ProjectBrowser() {
  return (
    <>
      <PaletteTitle>Project Browser - Demo 4.rfa <Close /></PaletteTitle>
      <BrowserBox>
        <Tree>
          <li>
            <TreeRow>
              <Expander aria-label="Expand Views" />
              <TreeDash $w={7} />
              <TreeIcon><Icon name="views" /></TreeIcon>
              <TreeText>Views (all)</TreeText>
            </TreeRow>
          </li>
          <li>
            <TreeRow>
              <LeafRail />
              <TreeDash $w={7} />
              <TreeIcon><Icon name="sheets" /></TreeIcon>
              <TreeText $picked>Sheets (all)</TreeText>
            </TreeRow>
          </li>
          <li>
            <TreeRow>
              <Expander $open aria-label="Collapse Families" />
              <TreeDash $w={7} />
              <TreeIcon><Icon name="families" /></TreeIcon>
              <TreeText>Families</TreeText>
            </TreeRow>
            <Tree $indent={19}>
              {["Pattern", "Specialty Equipment"].map((family) => (
                <li key={family}>
                  <TreeRow>
                    <Expander aria-label={`Expand ${family}`} />
                    <TreeDash $w={9} />
                    <TreeText>{family}</TreeText>
                  </TreeRow>
                </li>
              ))}
            </Tree>
          </li>
        </Tree>
      </BrowserBox>
    </>
  );
}

function PropertyRow({ row }) {
  if (row.title) {
    return (
      <tr>
        <Section colSpan={3}>
          <SectionInner>
            {row.title}
            <svg width="8" height="9" viewBox="0 0 8 9" fill="none" stroke="#222" strokeWidth="1.3">
              <path d="M1.5 4L4 1.5 6.5 4M1.5 8L4 5.5 6.5 8" />
            </svg>
          </SectionInner>
        </Section>
      </tr>
    );
  }
  const id = row.name.replace(/\W/g, "");
  return (
    <tr>
      <NameCell $off={row.off}>
        {row.check ? <label htmlFor={id}>{row.name}</label> : row.name}
      </NameCell>
      <ValueCell $focus={row.focus}>
        {row.check && <Check type="checkbox" id={id} disabled={row.off} />}
        {row.edit && <EditButton>Edit...</EditButton>}
        {row.value}
      </ValueCell>
      <ValueCell />
    </tr>
  );
}

function PropertiesPalette() {
  return (
    <>
      <PaletteTitle>Properties <Close /></PaletteTitle>
      <PropertiesBox>
        <TypePreview>
          <PreviewThumb><PreviewLetter>R</PreviewLetter></PreviewThumb>
          <WideCaret $color="#888" />
        </TypePreview>
        <TypeRow>
          <SelectBox $w={172}>
            <TypeSelect aria-label="Type selector" defaultValue="points">
              <option value="points">New Reference Points</option>
            </TypeSelect>
            <WideCaret $color="#111" />
          </SelectBox>
          <EditType disabled><Icon name="editType" />Edit Type</EditType>
        </TypeRow>
        <GridArea>
          <PropTable>
            <colgroup>
              <col width="115" />
              <col width="115" />
              <col width="12" />
            </colgroup>
            <tbody>
              {PROPERTIES.map((row) => (
                <PropertyRow key={row.title || row.name} row={row} />
              ))}
            </tbody>
          </PropTable>
          <ScrollBar>
            <Caret $up />
            <ScrollThumb><Grip /><Grip /><Grip /></ScrollThumb>
            <Caret />
          </ScrollBar>
        </GridArea>
        <PropertiesFoot>
          <a href="#help">Properties help</a>
          <ApplyButton disabled>Apply</ApplyButton>
        </PropertiesFoot>
      </PropertiesBox>
    </>
  );
}

/* 3D view */
const ViewColumn = styled.div`
  display: flex;
  flex-direction: column;
  flex: 1;
  min-width: 0;
  border-left: 1px solid #6e6e6e;
`;

const Canvas = styled.div`
  position: relative;
  flex: 1;
  min-height: 0;
  overflow: hidden;
  border-top: 1px solid #6f6f6f;
  background: linear-gradient(#828282, #bfbfbf);
`;

const Scene = styled.svg`
  width: 100%;
  height: 100%;
  fill: none;
`;

const Tip = styled.div`
  position: absolute;
  left: ${(p) => p.$x}px;
  top: ${(p) => p.$y}px;
  padding: 1px 4px;
  border: 1px solid #777;
  border-radius: 2px;
  background: linear-gradient(#fff, #e6e7f2);
  box-shadow: 3px 3px 3px rgba(0, 0, 0, 0.5);
  color: #555;
  font-size: 13px;
  line-height: 20px;
  white-space: nowrap;
`;

const ViewBar = styled.div`
  display: flex;
  flex: none;
  align-items: center;
  height: 20px;
  padding-left: ${(p) => p.$start}px;
  background: #efefef;
`;

const Scale = styled.span`
  width: 56px;
  font-family: "DejaVu Sans", sans-serif;
  font-size: 11px;
  color: #222;
`;

const ViewTool = styled.button`
  display: flex;
  align-items: center;
  justify-content: center;
  width: ${(p) => p.$w || 23}px;
  height: 20px;
  padding: 0 0 2px;
  border: 0;
  background: none;
`;

const StatusBar = styled.footer`
  display: flex;
  flex: none;
  align-items: center;
  height: 28px;
  padding: 4px 0 0 1px;
  border-top: 1px solid #a5a5a5;
  background: linear-gradient(#e6e6e6, #c6c6c6);
  color: #333;
`;

const StatusDivider = styled.span`
  width: 1px;
  height: 22px;
  margin-left: 54%;
  background: #d8d8d8;
`;

const VIEW_TOOLS = ["detail", "visual", "hideX", "hideBulb", "lockView", "glasses", "constraints", "analytic"];

function ViewControls() {
  return (
    <ViewBar $start={27}>
      <Scale>1 : 96</Scale>
      {VIEW_TOOLS.map((tool) => (
        <ViewTool key={tool} aria-label={tool}><Icon name={tool} /></ViewTool>
      ))}
      <ViewTool $w={18} aria-label="Collapse">
        <svg width="5" height="8" viewBox="0 0 5 8"><path d="M5 0v8L0 4z" fill="#222" /></svg>
      </ViewTool>
    </ViewBar>
  );
}

const GREEN = "#2c7a2a";
const CYAN = "#3290c8";

function PlacingScene() {
  return (
    <Canvas>
      <Scene>
        <path d="M0 19L443 116" stroke="#2a8580" />
        <path d="M0 161L443 123M0 195L443 157M0 507L443 249" stroke={GREEN} />
        <path d="M0 628L443 370" stroke={CYAN} />
        <rect x="268" y="341" width="12" height="12" fill="#c45fd0" stroke="#d55cc4" />
        <circle cx="274" cy="347" r="5" fill="#3a3bb0" />
        <path d="M271 344l6 6M277 344l-6 6" stroke="#6a6be0" />
      </Scene>
      <Tip $x={272} $y={358}>Point</Tip>
    </Canvas>
  );
}

function ReferenceScene() {
  return (
    <Canvas>
      <Scene>
        <path d="M50 0L213 497M0 64L145 501V543M213 497V539" stroke={GREEN} />
        <path d="M0 105L818 57M0 134L818 86M609 0L818 67" stroke={GREEN} />
        <path d="M0 409L184 467L818 112M184 556L560 343" stroke={GREEN} />
        <path d="M560 343L818 201M0 497L184 556L670 711M0 658L184 556" stroke={CYAN} />
        <ellipse cx="184" cy="556" rx="49" ry="21" stroke="#222" />
        <circle cx="184" cy="556" r="13" fill="#d5ecf8" fillOpacity=".7" />
        <path d="M171 536l26 10v29l-26-10zM174 547l21-11v29l-21 11zM161 556l28 9 18-11-27-8z" stroke="#4aa8de" />
        <g fill="#000">
          <circle cx="184" cy="467" r="5.5" />
          <circle cx="145" cy="502" r="5.5" />
          <circle cx="213" cy="497" r="5.5" />
          <circle cx="145" cy="543" r="3" />
          <circle cx="213" cy="539" r="3" />
          <circle cx="184" cy="556" r="5.5" fill="#16242e" />
          <circle cx="547" cy="264" r="3.5" />
        </g>
        <path d="M184 551v5l-4 3M184 556l4 3" stroke="#4aa8de" />
        <path d="M529 238l36 11v41l-36-12z" stroke="#4560ab" strokeWidth="2" />
      </Scene>
      <Tip $x={551} $y={275}>Reference Points : Reference Point</Tip>
    </Canvas>
  );
}

function PlacingPane() {
  return (
    <Pane>
      <Header>
        <AppCell>
          <AppButton aria-label="Application menu">
            <AppLetter>R</AppLetter>
            <Caret />
          </AppButton>
        </AppCell>
        <HeaderRows>
          <QuickBar $start={8}>
            <QuickTools tools={[...QUICK_START, ...QUICK_TOOLS]} />
          </QuickBar>
          <TabBar $start={5}>
            <Tab $w={61}>Create</Tab>
            <Tab $w={56}>Insert</Tab>
            <Tab $w={52}>View</Tab>
            <Tab $w={72}>Manage</Tab>
            <Tab $w={69}>Add-Ins</Tab>
            <Tab $w={109}>Quantification</Tab>
            <Tab $w={103}>Site Designer</Tab>
            <Tab $w={75}>BIM One</Tab>
            <Tab $w={64} $active $green $align="flex-start" $pad={11}>Modify |</Tab>
          </TabBar>
        </HeaderRows>
      </Header>
      <Ribbon $green>
        <Panel $w={65}>
          <PanelBody>
            <BigTool $w={60} $gap={12} $top={8}><Icon name="cursor" />Modify</BigTool>
          </PanelBody>
          <PanelLabel>Select <WideCaret /></PanelLabel>
        </Panel>
        <Panel $w={96}>
          <PanelBody>
            <Stack $top={2} $gap={2}>
              <IconTool $w={44} $h={38} aria-label="Type Properties"><Icon name="typeProps" /></IconTool>
              <IconTool $w={44} $h={38} $on aria-label="Properties"><Icon name="propsPalette" /></IconTool>
            </Stack>
            <Stack $top={2} $gap={2}>
              <IconTool $w={47} $h={38} aria-label="Family Category"><Icon name="familyTypes" /></IconTool>
              <IconTool $w={47} $h={38} aria-label="Family Types"><Icon name="familyGrid" /></IconTool>
            </Stack>
          </PanelBody>
          <PanelLabel>Properties</PanelLabel>
        </Panel>
        <DrawPanel active />
        <WorkPlanePanel />
        <ClipboardPanel />
        <GeometryPanel />
      </Ribbon>
      <OptionsBar $green>
        <OptionsMode>Modify | Place Lines</OptionsMode>
        <OptionsSep />
        <PlaneLabel>
          Placement Plane:
          <SelectBox $w={118}>
            <PlaneSelect defaultValue="point">
              <option value="point">Reference Point</option>
            </PlaneSelect>
            <WideCaret $color="#111" />
          </SelectBox>
        </PlaneLabel>
        <OptionsSep />
        <ViewerToggle aria-label="Show work plane"><Icon name="workPlaneViewer" /></ViewerToggle>
      </OptionsBar>
      <Workspace>
        <Side>
          <ProjectBrowser />
          <PropertiesPalette />
        </Side>
        <ViewColumn>
          <PlacingScene />
          <ViewControls />
        </ViewColumn>
      </Workspace>
      <StatusBar>POINT of [Reference Points : Reference Point]</StatusBar>
    </Pane>
  );
}

function ReferencePane() {
  return (
    <Pane>
      <Header>
        <HeaderRows>
          <QuickBar $start={2}>
            <QuickTools tools={QUICK_TOOLS} />
            <WindowTitle><span>Autodesk Revit 2017 -</span><span>Demo 4.rfa - 3D View: {"{3D}"}</span></WindowTitle>
          </QuickBar>
          <TabBar $start={0}>
            <Tab $w={24} $align="flex-end" $pad={11}>Manage</Tab>
            <Tab $w={69}>Add-Ins</Tab>
            <Tab $w={109}>Quantification</Tab>
            <Tab $w={103}>Site Designer</Tab>
            <Tab $w={75}>BIM One</Tab>
            <Tab $w={66} $active>Modify</Tab>
            <RibbonToggle aria-label="Minimize ribbon">
              <ToggleFace><Caret $up /></ToggleFace>
              <Caret $color="#000" />
            </RibbonToggle>
          </TabBar>
        </HeaderRows>
      </Header>
      <Ribbon>
        <DrawPanel />
        <WorkPlanePanel setting />
        <ClipboardPanel />
        <GeometryPanel />
        <ModifyPanel />
        <Panel $w={64}>
          <PanelBody>
            <Stack $top={4} $gap={6}>
              <SplitTool>
                <IconTool $w={44} $h={34} aria-label="Measure"><Icon name="ruler" /></IconTool>
                <Caret $color="#777" />
              </SplitTool>
              <SplitTool>
                <IconTool $w={44} $h={38} aria-label="Aligned Dimension"><Icon name="dimensionBig" /></IconTool>
                <Caret $color="#000" />
              </SplitTool>
            </Stack>
          </PanelBody>
          <PanelLabel>Measure</PanelLabel>
        </Panel>
        <Panel $w={68}>
          <PanelBody>
            <BigTool $w={62} $gap={6} $top={4}>
              <Icon name="load" />
              <span>Load into<br />Project</span>
            </BigTool>
          </PanelBody>
          <PanelLabel $tint />
        </Panel>
      </Ribbon>
      <OptionsBar />
      <Workspace>
        <ViewColumn>
          <ReferenceScene />
          <ViewControls />
        </ViewColumn>
      </Workspace>
      <StatusBar><StatusDivider /></StatusBar>
    </Pane>
  );
}

export default function App() {
  return (
    <>
      <GlobalStyle />
      <Page>
        <PlacingPane />
        <ReferencePane />
      </Page>
    </>
  );
}
